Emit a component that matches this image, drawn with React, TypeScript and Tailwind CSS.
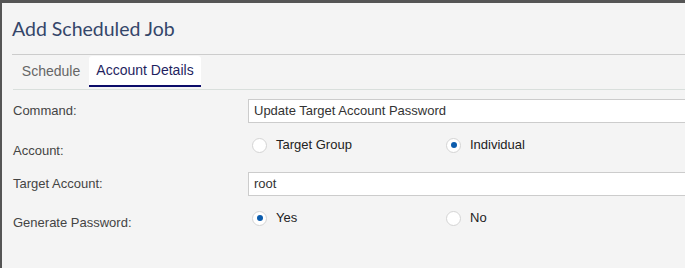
import React from "react";

function Radio({ checked, label }: { checked: boolean; label: string }) {
  return (
    <div className="flex w-[194px] shrink-0 items-center">
      <span className="flex h-[15px] w-[15px] shrink-0 items-center justify-center rounded-full border border-[#d4d4d4] bg-white">
        {checked && <span className="h-[6px] w-[6px] rounded-full bg-[#0b5cad]" />}
      </span>
      <span className="ml-[9px] text-[13px] leading-[16px] text-[#222]">{label}</span>
    </div>
  );
}

export default function App() {
  return (
    <div
      className="h-[268px] w-[685px] overflow-hidden border-l-[2px] border-t-[3px] border-[#555] bg-[#f4f4f4]"
      style={{ fontFamily: '"Liberation Sans", Arial, sans-serif' }}
    >
      <div className="flex h-[51px] items-center pl-[10px]">
        <h1
          className="text-[19.5px] font-normal leading-none text-[#34466a]"
          style={{ fontFamily: 'Lato, "Liberation Sans", sans-serif' }}
        >
          Add Scheduled Job
        </h1>
      </div>
      <div className="ml-[10px] border-b border-[#cccccc]" />
      <div className="ml-[11px] flex border-b border-[#d9dfdc] pb-[2px] pt-[1px]">
        <div className="flex h-[31px] w-[76px] items-center justify-center text-[14px] text-[#666]">
          Schedule
        </div>
        <div className="flex h-[31px] w-[112px] items-center justify-center rounded-t-[3px] border-b-2 border-[#0c0c6a] bg-white text-[14px] text-[#1f1f5f]">
          Account Details
        </div>
      </div>
      <div className="pt-[9px]">
        <div className="flex h-[24px] items-center">
          <div className="w-[246px] shrink-0 pl-[11px] text-[13px] text-[#444]">Command:</div>
          <div className="flex h-[24px] w-[480px] shrink-0 items-center border border-[#cccccc] bg-white pl-[5px] text-[13px] text-[#333]">
            Update Target Account Password
          </div>
        </div>
        <div className="mt-[12px] flex h-[20px] items-start">
          <div className="mt-[8px] w-[246px] shrink-0 pl-[11px] text-[13px] leading-[16px] text-[#444]">Account:</div>
          <div className="flex h-[20px] items-center pl-[4px]">
            <Radio checked={false} label="Target Group" />
            <Radio checked={true} label="Individual" />
          </div>
        </div>
        <div className="mt-[17px] flex h-[24px] items-center">
          <div className="w-[246px] shrink-0 pl-[11px] text-[13px] text-[#444]">Target Account:</div>
          <div className="flex h-[24px] w-[480px] shrink-0 items-center border border-[#cccccc] bg-white pl-[5px] text-[13px] text-[#333]">
            root
          </div>
        </div>
        <div className="mt-[12px] flex h-[20px] items-start">
          <div className="mt-[7px] w-[246px] shrink-0 pl-[11px] text-[13px] leading-[16px] text-[#444]">Generate Password:</div>
          <div className="flex h-[20px] items-center pl-[4px]">
            <Radio checked={true} label="Yes" />
            <Radio checked={false} label="No" />
          </div>
        </div>
      </div>
    </div>
  );
}
